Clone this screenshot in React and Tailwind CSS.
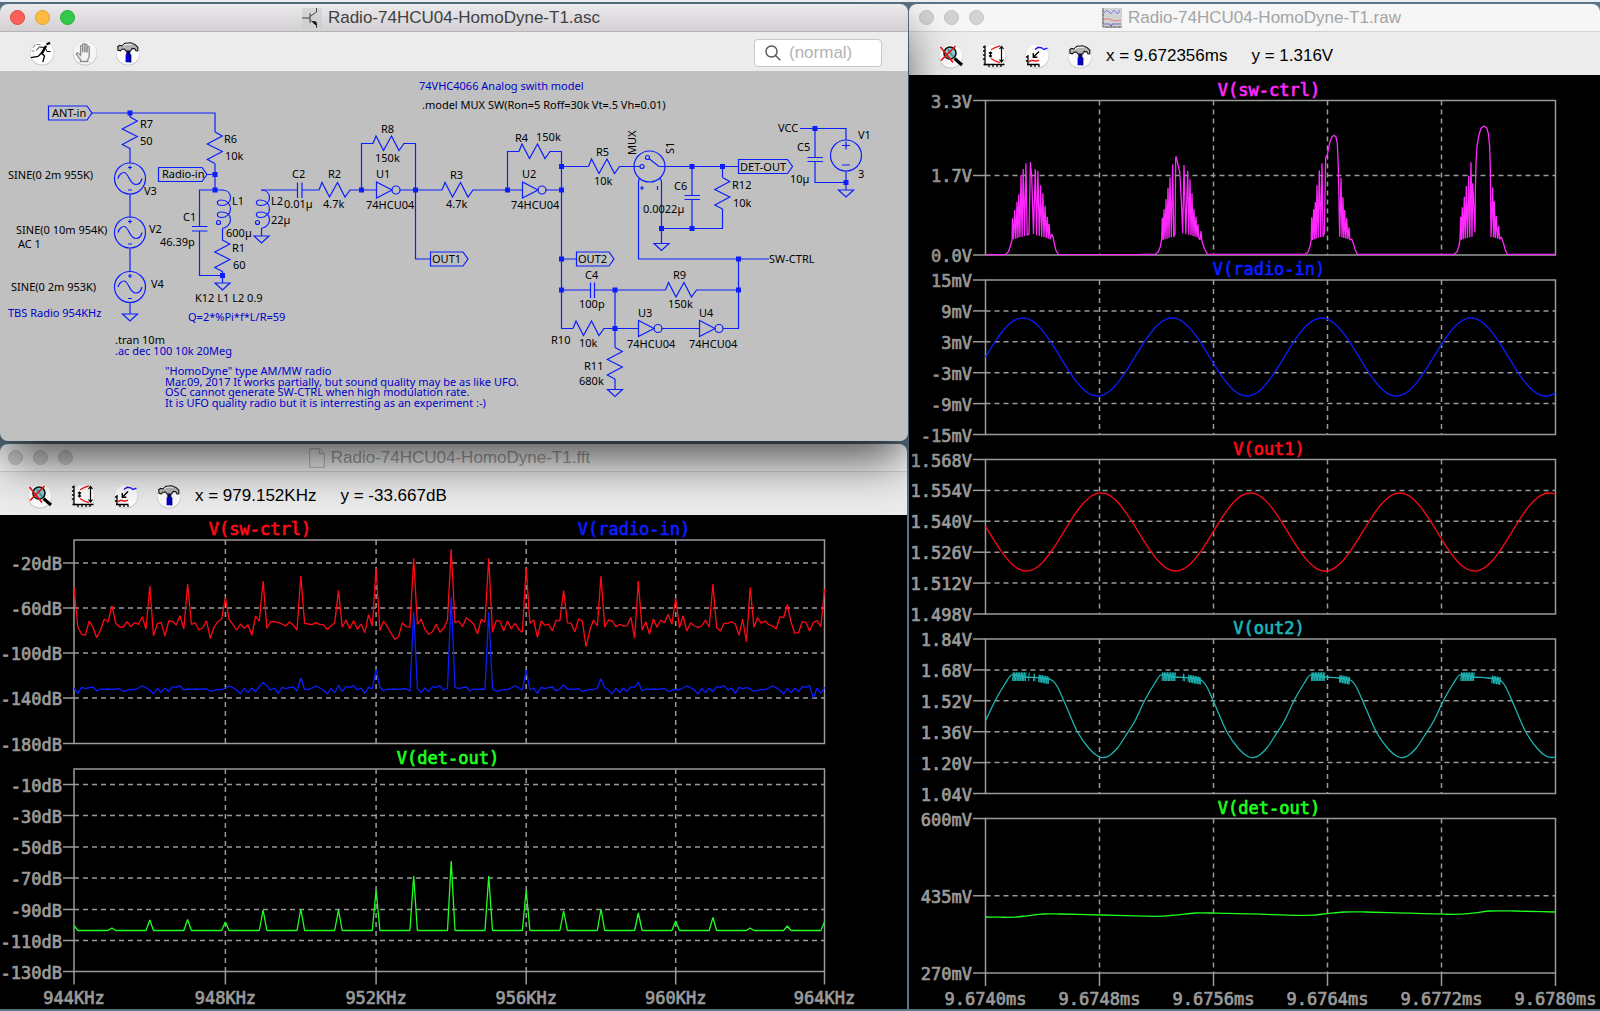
import React from "react";

const WIRE = "#0a1eff";
const NOTE = "#0000c8";

/* ---------- helpers ---------- */

const pts = (list) => "M" + list.map(([x, y]) => `${x.toFixed(1)} ${y.toFixed(1)}`).join("L");

/* cubic curve through points with rising x */
function smooth(list) {
  const slope = list.map((p, i) => {
    const a = list[i - 1] || p;
    const b = list[i + 1] || p;
    return (b[1] - a[1]) / (b[0] - a[0]);
  });
  let d = `M${list[0][0]} ${list[0][1]}`;
  for (let i = 0; i < list.length - 1; i++) {
    const [x1, y1] = list[i];
    const [x2, y2] = list[i + 1];
    const h = (x2 - x1) / 3;
    d += `C${x1 + h} ${y1 + slope[i] * h} ${x2 - h} ${y2 - slope[i + 1] * h} ${x2} ${y2}`;
  }
  return d;
}

/* ---------- toolbar icons ---------- */

function Disc({ children, dim }) {
  return (
    <svg viewBox="0 0 24 24" className="block size-6 overflow-visible" aria-hidden="true">
      <circle cx="12" cy="12.4" r="12" fill="#00000030" />
      <circle cx="12" cy="12" r="11.6" fill={dim ? "#f6f6f6" : "#fdfdfd"} />
      {children}
    </svg>
  );
}

const RunIcon = () => (
  <Disc>
    <g fill="none" stroke="#000" strokeLinecap="square">
      <path d="M17.5 3l1.5-.8" strokeWidth="2.2" />
      <path d="M15.5 6L12 12" strokeWidth="2.4" />
      <path d="M15 6.5L9.5 6L6.500 9" strokeWidth="1" />
      <path d="M15.5 7.5l1.5 3h3" strokeWidth="1" />
      <path d="M11.5 12l-3.5 3.5L1.500 16.500" strokeWidth="1.300" />
      <path d="M12 12.5l2.5 2.5l-1.500 5.500" strokeWidth="1.300" />
      <path d="M3 6.500l2-2.500M7 3.500h3M2 10h2" strokeWidth="0.9" stroke="#777" />
    </g>
  </Disc>
);

const HandIcon = () => (
  <Disc dim>
    <path
      d="M7.5 20.5v-2L3.6 13.6c-.8-1.2.8-2.2 1.8-1.2l2.2 2V5.6c0-1.6 2-1.6 2 0V11 3.9c0-1.6 2.2-1.6 2.2 0V11 4.3c0-1.6 2.2-1.6 2.2 0v7V6.3c0-1.6 2.2-1.6 2.2 0v8.6c0 2-.9 2.6-1.4 3.6v2z"
      fill="#f3f3f3"
      stroke="#8b8b8b"
      strokeWidth="1.3"
    />
    <path d="M9.6 6v5.5M11.8 5v6.5M14 6v5.5" stroke="#8b8b8b" strokeWidth="1" />
  </Disc>
);

const HammerIcon = () => (
  <Disc>
    <path
      d="M1.8 5.500l2-1.200 2.200.7 2.800-2.600 6-.6 4.400 1.800 2.600 2.600v3.600l-1.800.2-1.200-2.200-2.600-.4-1.600 2.600h-4.600l-1.600-2-2.400.2-1.600 1.600-2.400-.6z"
      fill="#b4b4b4"
      stroke="#111"
      strokeWidth="1.100"
    />
    <path d="M7 4.800l3-1.500h6" stroke="#f8f8f8" strokeWidth="1.100" fill="none" />
    <rect x="10.3" y="10" width="4" height="4" fill="#0a0a5c" />
    <rect x="9.6" y="13.5" width="5.600" height="7.800" fill="#0000d8" />
    <rect x="13.5" y="13.5" width="1.700" height="7.800" fill="#000070" />
  </Disc>
);

const ZoomOffIcon = () => (
  <Disc>
    <circle cx="11" cy="9" r="6" fill="#7fd0d8" stroke="#111" strokeWidth="1.6" />
    <path d="M9 5.5l5 7" stroke="#5a8a8c" strokeWidth="1.6" />
    <path d="M15.5 14.5l7.5 6.5" stroke="#000" strokeWidth="3" />
    <path d="M1.5 3L14 18.5M16.5 2L2 16.5" stroke="#f01010" strokeWidth="1.7" />
  </Disc>
);

const FitIcon = () => (
  <Disc>
    <path d="M3 1.5v20M1.5 20.5h21M1 3h2M1 7h2M1 11h2M1 15h2M7 21v2M11 21v2M15 21v2M19 21v2" stroke="#000" strokeWidth="1.3" fill="none" />
    <path d="M9 5.8l4-2.2 5-1.8M9 14.5l4 2.4 5 1.8" stroke="#f01818" strokeWidth="1.3" fill="none" />
    <path d="M8.5 8v5M7 9.5L8.500 8 10 9.500M7 11.500L8.500 13 10 11.500M19.500 2.500v15.500M17.500 5l2-2.500 2 2.500M17.500 15.500l2 2.500 2-2.500" stroke="#000" strokeWidth="1.2" fill="none" />
  </Disc>
);

const TraceIcon = () => (
  <Disc>
    <path d="M3 11v10M2 20.5h12.5M1 13h2M1 17h2M6 21v2M10 21v2M14 21v2" stroke="#000" strokeWidth="1.3" fill="none" />
    <path d="M4 17.5l3-1.2 4 .9 3-1" stroke="#f01818" strokeWidth="1.4" fill="none" />
    <path d="M10 5.5l3-2.2 3.500.4 2.500 1.800 3.500-1.400" stroke="#1a1af0" strokeWidth="1.5" fill="none" />
    <path d="M14 7.5L8.500 13M8.300 9v4.200h4" stroke="#000" strokeWidth="1.4" fill="none" />
  </Disc>
);

/* ---------- title bar icons ---------- */

const TransistorIcon = () => (
  <svg viewBox="0 0 20 20" className="size-5" aria-hidden="true">
    <rect width="20" height="20" fill="#cfcdcf" opacity="0.7" />
    <path d="M0 10h8M8 5v10M8 8.500L14.500 4V0M8 11.500l5 5M14.500 17v3" stroke="#333" strokeWidth="0.9" fill="none" />
    <path d="M10.500 13.500l4 4-.5-3.500z" fill="#111" stroke="#111" />
  </svg>
);

const PageIcon = () => (
  <svg viewBox="0 0 16 20" className="h-5 w-4" aria-hidden="true">
    <path d="M.7 .7h9.600l5 5v13.600H.7zM10.300 .7v5h5" fill="#ffffff30" stroke="#b8b8b8" strokeWidth="1" />
  </svg>
);

const WaveIcon = () => (
  <svg viewBox="0 0 20 20" className="size-5" aria-hidden="true">
    <rect width="20" height="20" fill="#d2d2d2" />
    <path d="M2 5l3-3 3.500 4 3.500-4 3.500 4L18 2" stroke="#7a7af0" fill="none" />
    <path d="M2 11.500l4-.9 5 1.800 4 .6 4-1" stroke="#f07a7a" fill="none" />
    <path d="M2 16h6v1.500h2V16h9" stroke="#6a6ac0" fill="none" />
    <path d="M1 0v19h19M0 3h2M0 7h2M0 11h2M0 15h2M5 18v2M9 18v2M13 18v2M17 18v2" stroke="#777" fill="none" />
  </svg>
);

/* ---------- window chrome ---------- */

function Lights({ active }) {
  const tone = active
    ? ["bg-[#fc605b] border-[#e2463f]", "bg-[#fdbc40] border-[#e0a033]", "bg-[#34c84a] border-[#1fad33]"]
    : ["bg-[#d3d3d3] border-[#c3c3c3]", "bg-[#d3d3d3] border-[#c3c3c3]", "bg-[#d3d3d3] border-[#c3c3c3]"];
  return (
    <div className="flex gap-[10px]">
      {["Close", "Minimize", "Zoom"].map((n, i) => (
        <button key={n} type="button" aria-label={n} className={`size-[15px] rounded-full border ${tone[i]}`} />
      ))}
    </div>
  );
}

function TitleBar({ active, icon, title, pad }) {
  return (
    <header
      className={`grid h-7 grid-cols-[1fr_auto_1fr] items-center border-b pr-4 ${pad} ${
        active
          ? "border-[#b6b4b6] bg-linear-to-b from-[#ebe9eb] to-[#d2d0d2] text-[#414141]"
          : "border-[#d4d4d4] bg-[#f6f6f6] text-[#a4a4a4]"
      }`}
    >
      <Lights active={active} />
      <div className="flex items-center gap-[6px]">
        {icon}
        <h1 className="text-[17px] leading-6 whitespace-nowrap">{title}</h1>
      </div>
    </header>
  );
}

const Tool = ({ label, children, disabled }) => (
  <button type="button" aria-label={label} disabled={disabled} className="size-6">
    {children}
  </button>
);

function PlotToolbar({ x, y, pad }) {
  return (
    <div className={`flex h-[43px] items-center gap-[19px] bg-[#ececec] pt-1 ${pad}`}>
      <Tool label="Zoom to fit"><ZoomOffIcon /></Tool>
      <Tool label="Autorange"><FitIcon /></Tool>
      <Tool label="Add trace"><TraceIcon /></Tool>
      <Tool label="Control panel"><HammerIcon /></Tool>
      <output className="-ml-[5px] flex gap-6 text-[17px] whitespace-nowrap text-black">
        <span>{x}</span>
        <span>{y}</span>
      </output>
    </div>
  );
}

/* ---------- schematic ---------- */

const VRes = ({ x, y }) => <path d={`M${x} ${y}l7.3 4l-15 8l15 7.5l-15 8l7.7 4`} />;
const HRes = ({ x, y }) => <path d={`M${x} ${y}l3-7.5l7.5 14.5l8-14.5l7.5 14.5l5-7`} />;
const Gnd = ({ x, y }) => <path d={`M${x - 7.5} ${y}h15l-7.5 7z`} />;
const Inv = ({ x, y }) => (
  <>
    <path d={`M${x} ${y - 8}v16l15.5-8z`} />
    <circle cx={x + 19.5} cy={y} r="4" />
  </>
);
const Port = ({ x, y, w }) => <path d={`M${x} ${y - 7}h${w}l5 7l-5 7h-${w}z`} />;
const Coil = ({ x, y }) => (
  <>
    <path
      d={`M${x} ${y}c6 0 8.5 4 8.5 8c0 5-4.5 7.5-8.5 7.5c-6 0-6-5.5-1-5.5c6 0 9.5 4 9.5 9c0 5-4.5 8.5-8.5 8.5c-6 0-6-5.5-1-5.5c6 0 9.5 3 9.5 7.5c0 5-4 8.500-8.500 9`}
    />
    <circle cx={x - 3.5} cy={y + 32.5} r="2" />
  </>
);
const Sine = ({ x, y }) => (
  <>
    <circle cx={x} cy={y} r="15.5" />
    <path d={`M${x - 12} ${y}c1-4 4-6 6-6c5 0 5 12 12 12c3 0 5-2 6-6M${x - 2} ${y - 11}h4M${x} ${y - 13}v4M${x - 2} ${y + 11.5}h4`} />
  </>
);

const DOTS = [
  [130, 113], [215, 174.5], [215, 190], [222.5, 275.5], [361.5, 190], [415.5, 190], [507.5, 190],
  [561.5, 166.5], [561.5, 190], [561.5, 259], [561.5, 290], [615, 290], [615, 328.5], [692, 166.5],
  [722.5, 166.5], [661.5, 228.5], [692, 228.5], [738.5, 259], [738.5, 290], [815, 128.5], [846, 182.5],
];

const WIRES =
  "M92 113H215V132M130 113V117M130 148V163M130 194V217.5M130 248.5V271.5M130 303V314" +
  "M215 163.5V190M207 174.5H215M222.5 190H199.5V226.5M192 226.5H207.5M192 231H207.5M199.5 231V275.5H222.5" +
  "V283M222.5 228.5V240.5M222.5 271V275.5M261.5 229V236M261.5 190H297.5M297.5 182.5V198M302 182.5V198M302 190H319" +
  "M349.5 190H376.5M361.5 190V143.5H373M403.5 143.5H415.5V259H430.5M400 190H442M472.5 190H522.5" +
  "M507.5 190V151.5H519M549.5 151.5H561.5V328.5H573M545.5 190H561.5M561.5 166.5H588.5M619 166.5H640" +
  "M561.5 259H576.5M561.5 290H590.5M590.5 282.5V298M594.5 282.5V298M594.5 290H665.5M696 290H738.5" +
  "M603.5 328.5H638.5M615 290V347.5M615 379V389.5M661.5 328.5H699.5M723 328.5H738.5V259" +
  "M649.5 159L659 166.5H738.5M640 178C639 179 638.5 180 638.5 182V259H769M659.5 178C661 179 661.5 180 661.5 182V243.5" +
  "M692 166.5V195.5M684.5 195.5H700M684.5 199.5H700M692 199.5V228.5M661.5 228.5H722.5V209M722.5 166.5V177.5" +
  "M800 128.5H846V140M815 128.5V157.5M807.5 157.5H823M807.5 161.5H823M815 161.5V182.5H846M846 171V190" +
  "M842 145.5H850M846 141.5V149.5M842 165H850M640 188H644M642 186V190M657.5 186V190";

const LABELS = [
  [52, 117, "ANT-in"], [140, 128, "R7"], [140, 145, "50"], [224, 143, "R6"], [225, 160, "10k"],
  [8, 179, "SINE(0 2m 955K)"], [144, 195, "V3"], [162, 178, "Radio-in"], [232, 205, "L1"], [271, 205, "L2"],
  [292, 178, "C2"], [284, 208, "0.01µ"], [328, 178, "R2"], [323, 208, "4.7k"], [381, 133, "R8"],
  [375, 162, "150k"], [376, 178, "U1"], [366, 209, "74HCU04"], [183, 221, "C1"], [226, 237, "600µ"],
  [271, 224, "22µ"], [160, 246, "46.39p"], [232, 252, "R1"], [233, 269, "60"], [16, 234, "SINE(0 10m 954K)"],
  [18, 248, "AC 1"], [149, 233, "V2"], [151, 288, "V4"], [11, 291, "SINE(0 2m 953K)"], [195, 302, "K12 L1 L2 0.9"],
  [115, 344, ".tran 10m"], [422, 109, ".model MUX SW(Ron=5 Roff=30k Vt=.5 Vh=0.01)"], [450, 179, "R3"],
  [446, 208, "4.7k"], [515, 142, "R4"], [536, 141, "150k"], [522, 178, "U2"], [511, 209, "74HCU04"],
  [596, 156, "R5"], [594, 185, "10k"], [432, 263, "OUT1"], [578, 263, "OUT2"], [585, 279, "C4"],
  [579, 308, "100p"], [551, 344, "R10"], [579, 347, "10k"], [584, 370, "R11"], [579, 385, "680k"],
  [674, 190, "C6"], [643, 213, "0.0022µ"], [732, 189, "R12"], [733, 207, "10k"], [740, 171, "DET-OUT"],
  [778, 132, "VCC"], [797, 151, "C5"], [858, 139, "V1"], [858, 178, "3"], [790, 183, "10µ"],
  [769, 263, "SW-CTRL"], [673, 279, "R9"], [668, 308, "150k"], [638, 317, "U3"], [699, 317, "U4"],
  [627, 348, "74HCU04"], [689, 348, "74HCU04"],
];

const NOTES = [
  [419, 90, "74VHC4066 Analog swith model"],
  [8, 317, "TBS Radio 954KHz"],
  [188, 321, "Q=2*%Pi*f*L/R=59"],
  [115, 355, ".ac dec 100 10k 20Meg"],
  [165, 375, "\"HomoDyne\" type AM/MW radio"],
  [165, 386, "Mar.09, 2017 It works partially, but sound quality may be as like UFO."],
  [165, 396, "OSC cannot generate SW-CTRL when high modulation rate."],
  [165, 407, "It is UFO quality radio but it is interresting as an experiment :-)"],
];

function Schematic() {
  return (
    <svg viewBox="0 71 908 370" className="block h-auto w-full bg-[#c0c0c0] font-['Noto_Sans',sans-serif] text-[11px]" role="img" aria-label="Schematic">
      <g fill="none" stroke={WIRE} strokeWidth="1.2">
        <path d={WIRES} />
        <VRes x={130} y={117} />
        <VRes x={215} y={132} />
        <VRes x={222.5} y={240} />
        <VRes x={615} y={347.5} />
        <VRes x={722.5} y={177.5} />
        <HRes x={319} y={190} />
        <HRes x={373} y={143.5} />
        <HRes x={442} y={190} />
        <HRes x={519} y={151.5} />
        <HRes x={588.5} y={166.5} />
        <HRes x={573} y={328.5} />
        <HRes x={665.5} y={290} />
        <Gnd x={130} y={314} />
        <Gnd x={222.5} y={283} />
        <Gnd x={261.5} y={236} />
        <Gnd x={615} y={389.5} />
        <Gnd x={661.5} y={243.5} />
        <Gnd x={846} y={190} />
        <Inv x={376.5} y={190} />
        <Inv x={522.5} y={190} />
        <Inv x={638.5} y={328.5} />
        <Inv x={699.5} y={328.5} />
        <Port x={48.5} y={113} w={38.5} />
        <Port x={158.5} y={174.5} w={43.5} />
        <Port x={430.5} y={259} w={32.5} />
        <Port x={576.5} y={259} w={32.5} />
        <Port x={738.5} y={166.5} w={49} />
        <Coil x={222} y={190} />
        <Coil x={261} y={190} />
        <Sine x={130} y={178.5} />
        <Sine x={130} y={232.5} />
        <Sine x={130} y={287} />
        <circle cx="846" cy="155.5" r="15.5" />
        <circle cx="649.5" cy="166.5" r="15.5" />
        <circle cx="642" cy="166.5" r="2" />
        <circle cx="647.5" cy="157.5" r="2" />
      </g>
      {DOTS.map(([x, y]) => (
        <rect key={`${x}-${y}`} x={x - 2.5} y={y - 2.5} width="5" height="5" fill={WIRE} />
      ))}
      <g fill="#000">
        {LABELS.map(([x, y, t]) => (
          <text key={`${x}-${y}`} x={x} y={y}>{t}</text>
        ))}
        <text transform="translate(636 155) rotate(-90)">MUX</text>
        <text transform="translate(674 154) rotate(-90)">S1</text>
      </g>
      <g fill={NOTE}>
        {NOTES.map(([x, y, t]) => (
          <text key={`${x}-${y}`} x={x} y={y}>{t}</text>
        ))}
      </g>
    </svg>
  );
}

/* ---------- plots ---------- */

const MONO = "block h-auto w-full bg-black font-['DejaVu_Sans_Mono',monospace] text-[17px]";

/* cols: x of each inner grid line; rows: [y, label] */
function Pane({ x0, x1, y0, y1, cols, rows, titles, labelX }) {
  return (
    <g>
      <g stroke="#9a9a9a" fill="none" strokeWidth="1.5">
        {cols.map((x) => (
          <path key={x} d={`M${x} ${y0}V${y1}`} strokeDasharray="5 4" />
        ))}
        {rows.map(([y, t]) => (
          <g key={t}>
            {y > y0 + 1 && y < y1 - 1 && <path d={`M${x0} ${y}H${x1}`} strokeDasharray="5 4" />}
            <path d={`M${labelX + 1} ${y}H${x0}`} />
          </g>
        ))}
        <path d={`M${x0} ${y0}H${x1}V${y1}H${x0}z`} />
      </g>
      <g fill="#9a9a9a" stroke="#9a9a9a" strokeWidth="0.7" textAnchor="end">
        {rows.map(([y, t]) => (
          <text key={t} x={labelX} y={y + 7}>{t}</text>
        ))}
      </g>
      {titles.map(([x, t, c]) => (
        <text key={t} x={x} y={y0 - 5} fill={c} stroke={c} strokeWidth="0.7" textAnchor="middle">{t}</text>
      ))}
    </g>
  );
}

function XAxis({ ticks, y, labelY }) {
  return (
    <g fill="#9a9a9a" textAnchor="middle">
      {ticks.map(([x, t]) => (
        <g key={t}>
          <path d={`M${x} ${y}v13`} stroke="#9a9a9a" strokeWidth="1.5" />
          <text x={x} y={labelY} stroke="#9a9a9a" strokeWidth="0.7">{t}</text>
        </g>
      ))}
    </g>
  );
}

const RED = [
  472, 590, 613, 615, 573, 592, 623, 600, 567, 576, 527, 580, 591, 591, 575, 590, 578, 583, 560, 598,
  468, 617, 581, 577, 618, 573, 574, 585, 557, 597, 462, 583, 578, 600, 594, 572, 625, 592, 575, 568,
  503, 568, 583, 600, 582, 595, 584, 616, 558, 574, 453, 595, 575, 575, 578, 582, 588, 576, 585, 600,
  438, 580, 582, 584, 578, 583, 584, 598, 588, 578, 481, 592, 570, 596, 572, 598, 582, 608, 554, 588,
  414, 602, 573, 590, 610, 628, 620, 578, 590, 591, 385, 583, 567, 598, 613, 605, 583, 607, 595, 570,
  358, 578, 573, 590, 563, 572, 583, 612, 568, 577, 385, 607, 572, 573, 602, 573, 597, 580, 598, 607,
  414, 580, 570, 622, 573, 586, 582, 603, 571, 572, 482, 578, 580, 606, 567, 573, 650, 601, 570, 588,
  438, 592, 570, 573, 590, 583, 588, 587, 562, 625, 453, 600, 575, 612, 567, 592, 570, 578, 553, 583,
  505, 593, 558, 603, 578, 588, 592, 588, 570, 592, 462, 592, 604, 580, 580, 575, 582, 616, 567, 636,
  472, 592, 563, 580, 573, 584, 588, 597, 560, 563, 524, 577, 610, 608, 575, 577, 603, 577, 572, 590, 478,
];

const BLUE_NOISE = [774, 790, 772, 776, 773, 771, 783, 777, 778, 777, 778, 777, 776, 784, 781, 778, 779, 774, 768, 773, 780, 792, 775, 788, 774, 785, 770, 772, 767, 780];
const BLUE_PEAK = { 50: 757, 60: 744, 70: 766, 80: 718, 90: 547, 100: 500, 110: 547, 120: 720, 130: 764, 140: 746, 150: 757, 197: 803 };
const GREEN_PEAK = [925.5, 928, 920, 919.5, 922, 910, 909, 910, 890, 876, 861, 876, 890, 911, 909, 913, 921, 917.5, 928, 926, 922];

/* logarithmic frequency axis, 944 to 964 kHz */
const freqX = (khz) => Math.round((74 + (750.5 * Math.log(khz / 944)) / Math.log(964 / 944)) * 10) / 10;
const redPath = pts(RED.map((v, i) => [freqX(944 + i / 10), 430 + v / 3]));
const bluePath = pts(RED.map((_, i) => [freqX(944 + i / 10), 430 + (BLUE_PEAK[i] ?? BLUE_NOISE[(i + Math.floor(i / 30) * 7) % 30]) / 3]));
const greenPath = pts(RED.map((_, i) => [freqX(944 + i / 10), i % 10 === 0 ? GREEN_PEAK[i / 10] : 930.5]));
const FFT_COLS = [948, 952, 956, 960].map(freqX);

function FftPlot() {
  return (
    <svg viewBox="0 515 907 494" className={MONO} role="img" aria-label="FFT plot">
      <Pane
        x0={74} x1={824.5} y0={540} y1={743.5} cols={FFT_COLS} labelX={62}
        rows={[[563, "-20dB"], [608, "-60dB"], [653, "-100dB"], [698, "-140dB"], [743.5, "-180dB"]]}
        titles={[[260, "V(sw-ctrl)", "#ff0a14"], [634, "V(radio-in)", "#0a1eff"]]}
      />
      <Pane
        x0={74} x1={824.5} y0={769} y1={971.5} cols={FFT_COLS} labelX={62}
        rows={[[784.5, "-10dB"], [815.5, "-30dB"], [847, "-50dB"], [878, "-70dB"], [909.5, "-90dB"], [940.5, "-110dB"], [971.5, "-130dB"]]}
        titles={[[448, "V(det-out)", "#1eff1e"]]}
      />
      <XAxis ticks={[944, 948, 952, 956, 960, 964].map((f) => [freqX(f), `${f}KHz`])} y={971.5} labelY={1004} />
      <g fill="none" strokeWidth="1.3" strokeLinejoin="bevel">
        <path d={redPath} stroke="#ff0a14" />
        <path d={bluePath} stroke="#0a1eff" />
        <path d={greenPath} stroke="#1eff1e" />
      </g>
    </svg>
  );
}

const PERIOD = 149.4;
const X0 = 985.5;
const X1 = 1555.5;
const TIME_COLS = [1099.5, 1213.5, 1327.5, 1441.5];
const wave = (mid, amp, zero) => {
  const out = [];
  for (let x = X0; x <= X1; x += 3) out.push([x, mid + amp * Math.sin((2 * Math.PI * (x - zero)) / PERIOD)]);
  return smooth(out);
};

/* comparator bursts: each entry is [x, y], alternating peak and dip */
const A = ([x, y]) => [900 + x / 2.24, y / 3];
const B = ([x, y]) => [1140 + x / 3, 100 + y / 3];
const comb = (tops, floor) => tops.flatMap(([x, y], i) => [[x, y], [(x + (tops[i + 1] ? tops[i + 1][0] : x + 6)) / 2, floor - i * 2]]);
const combUp = (tops, floor) => tops.flatMap(([x, y], i) => [[x, y], [(x + (tops[i + 1] ? tops[i + 1][0] : x + 5)) / 2, floor + i * 2]]);

const BURSTS = [
  [[192, 764], [235, 764], [243, 755], [249, 730], [251, 718],
    ...comb([[252, 655], [257, 630], [262, 605], [266, 583], [271, 525], [276, 507], [282, 490]], 718),
    [289, 702], [292, 486], [295, 530], [299, 702],
    ...combUp([[303, 507], [309, 512], [315, 556], [320, 580], [325, 617], [330, 650], [334, 672]], 706),
    [340, 703], [343, 712], [349, 750], [355, 763], [538, 764]].map(A),
  [[0, 463], [45, 463], [54, 457], [61, 440], [65, 418],
    ...comb([[67, 353], [72, 328], [78, 298], [84, 263], [90, 232], [98, 193]], 420),
    [105, 402], [107, 172], [109, 170], [113, 190], [119, 215], [124, 300], [128, 400],
    ...combUp([[132, 195], [143, 212], [150, 238], [156, 280], [162, 328], [168, 350], [174, 373]], 402),
    [180, 420], [183, 393], [186, 425], [195, 450], [203, 463],
    [495, 463], [504, 456], [510, 440], [514, 418],
    ...comb([[515, 352], [521, 328], [526, 306], [531, 256], [538, 211], [546, 190]], 420),
    [553, 400], [557, 172], [562, 165], [566, 143], [570, 125], [576, 110], [582, 106], [588, 111], [592, 130], [595, 200], [599, 410],
    ...combUp([[603, 233], [609, 292], [614, 330], [620, 355], [627, 382]], 412),
    [635, 417], [640, 430], [646, 450], [652, 463],
    [942, 463], [951, 456], [956, 440], [960, 418],
    ...comb([[962, 350], [967, 322], [973, 290], [979, 258], [986, 227], [993, 187]], 420),
    [998, 250], [1005, 397], [1006, 280], [1008, 190], [1011, 140], [1016, 108], [1023, 85], [1032, 78], [1040, 84], [1045, 100], [1049, 140], [1051, 200], [1053, 412],
    ...combUp([[1058, 262], [1063, 304], [1069, 347], [1076, 377]], 412),
    [1084, 411], [1090, 428], [1096, 450], [1102, 463], [1246, 463]].map(B),
];

const OUT2_SHAPE = [
  [0, 721], [10, 700], [20, 683], [26, 675], [40, 677], [54, 678], [66, 680], [72, 687], [81, 707], [92, 732], [104, 749],
  [113, 756.5], [118.5, 757.5], [124, 755.5], [132, 748], [140, 736],
];
const out2 = smooth([
  ...[0, 1, 2, 3].flatMap((k) => OUT2_SHAPE.map(([x, y]) => [X0 + x + k * PERIOD, y])).filter(([x]) => x < X1 - 2),
  [X1, 757],
]);
const RIPPLE = [
  [[27, 41], [43, 44], [48, 50], [53, 64]],
  [[27, 41], [48, 50], [53, 66]],
  [[27, 41], [55, 66]],
  [[27, 41], [58, 67]],
];
const ripple = RIPPLE.flatMap((blocks, k) =>
  blocks.map(([a, b]) => {
    const out = [];
    for (let x = a, i = 0; x <= b; x += 0.8, i++) {
      const top = x < 45 ? 672.5 : 673 + (x - 45) * 0.2;
      out.push([X0 + k * PERIOD + x, i % 2 ? top : top + (x < 45 ? 8.5 : 7.5)]);
    }
    return pts(out);
  })
).join("");

const detOut = smooth([
  [985.5, 917], [1000, 917.2], [1013, 917.2], [1027, 915.8], [1043, 914], [1060, 914], [1100, 915], [1145, 916.2], [1162, 916.2],
  [1178, 914.8], [1195, 913], [1215, 913.1], [1260, 914.2], [1295, 915.3], [1312, 915.2], [1327, 913.6], [1344, 912], [1365, 912],
  [1410, 913.2], [1445, 914.2], [1460, 914.2], [1475, 912.8], [1490, 911], [1514, 911], [1555.5, 912],
]);

function WaveformPlot() {
  const pane = (y0, rows, title, color) => (
    <Pane
      x0={X0} x1={X1} y0={y0} y1={y0 + 154.5} cols={TIME_COLS} labelX={972}
      rows={rows.map(([f, t]) => [y0 + f * 154.5, t])} titles={[[1269, title, color]]}
    />
  );
  const even = (list) => list.map((t, i) => [i / (list.length - 1), t]);
  return (
    <svg viewBox="909 75 691 934" className={MONO} role="img" aria-label="Waveform plot">
      {pane(100.5, [[0, "3.3V"], [0.485, "1.7V"], [1, "0.0V"]], "V(sw-ctrl)", "#ff28ff")}
      {pane(280, even(["15mV", "9mV", "3mV", "-3mV", "-9mV", "-15mV"]), "V(radio-in)", "#0a1eff")}
      {pane(459.5, even(["1.568V", "1.554V", "1.540V", "1.526V", "1.512V", "1.498V"]), "V(out1)", "#ff0a14")}
      {pane(639, even(["1.84V", "1.68V", "1.52V", "1.36V", "1.20V", "1.04V"]), "V(out2)", "#1eb4b4")}
      {pane(818.5, even(["600mV", "435mV", "270mV"]), "V(det-out)", "#1eff1e")}
      <XAxis
        ticks={["9.6740ms", "9.6748ms", "9.6756ms", "9.6764ms", "9.6772ms", "9.6780ms"].map((t, i) => [X0 + 114 * i, t])}
        y={973} labelY={1005}
      />
      <g fill="none" strokeWidth="1.3" strokeLinejoin="bevel">
        {BURSTS.map((b, i) => (
          <path key={i} d={pts(b)} stroke="#ff28ff" />
        ))}
        <path d={wave(357, -39, X0)} stroke="#0a1eff" />
        <path d={wave(532, 39, 989)} stroke="#ff0a14" />
        <path d={out2} stroke="#1eb4b4" />
        <path d={ripple} stroke="#1eb4b4" strokeWidth="1" />
        <path d={detOut} stroke="#1eff1e" />
      </g>
    </svg>
  );
}

/* ---------- desktop ---------- */

export default function App() {
  return (
    <main className="min-h-screen overflow-x-hidden border-t-2 border-[#e8eef2] bg-[#5a7486] pt-[2px] font-['Liberation_Sans',Arial,sans-serif]">
      <div className="grid grid-cols-[908fr_692fr] items-start">
        <div className="flex min-w-0 flex-col gap-[3px]">
          <section className="relative z-10 rounded-lg shadow-[0_22px_50px_-4px_rgba(0,0,0,0.7)]" aria-label="Schematic window">
            <div className="overflow-hidden rounded-lg">
              <TitleBar active icon={<TransistorIcon />} title="Radio-74HCU04-HomoDyne-T1.asc" pad="pl-[10px]" />
              <div className="flex h-[39px] items-center gap-[19px] bg-[#ececec] pt-[2px] pr-[26px] pl-[30px]">
                <Tool label="Run"><RunIcon /></Tool>
                <Tool label="Halt" disabled><HandIcon /></Tool>
                <Tool label="Control panel"><HammerIcon /></Tool>
                <label className="ml-auto flex h-7 w-32 items-center gap-2 rounded border border-[#c8c8c8] bg-white pl-[10px]">
                  <svg viewBox="0 0 16 16" className="size-4 shrink-0" fill="none" stroke="#555" strokeWidth="1.4" aria-hidden="true">
                    <circle cx="6.5" cy="6.5" r="5.5" />
                    <path d="M10.5 10.5l4.8 4.8" />
                  </svg>
                  <input aria-label="Search" placeholder="(normal)" className="w-full min-w-0 text-[17px] leading-6 outline-none placeholder:text-[#b4b4b4]" />
                </label>
              </div>
              <Schematic />
            </div>
          </section>
          <section className="mr-px overflow-hidden rounded-t-lg" aria-label="FFT window">
            <TitleBar icon={<PageIcon />} title="Radio-74HCU04-HomoDyne-T1.fft" pad="pl-2" />
            <PlotToolbar x="x = 979.152KHz" y="y = -33.667dB" pad="pl-7" />
            <FftPlot />
          </section>
        </div>
        <section className="ml-px min-w-0 overflow-hidden rounded-t-lg" aria-label="Waveform window">
          <TitleBar icon={<WaveIcon />} title="Radio-74HCU04-HomoDyne-T1.raw" pad="pl-[10px]" />
          <PlotToolbar x="x = 9.672356ms" y="y = 1.316V" pad="pl-[30px]" />
          <WaveformPlot />
        </section>
      </div>
    </main>
  );
}
